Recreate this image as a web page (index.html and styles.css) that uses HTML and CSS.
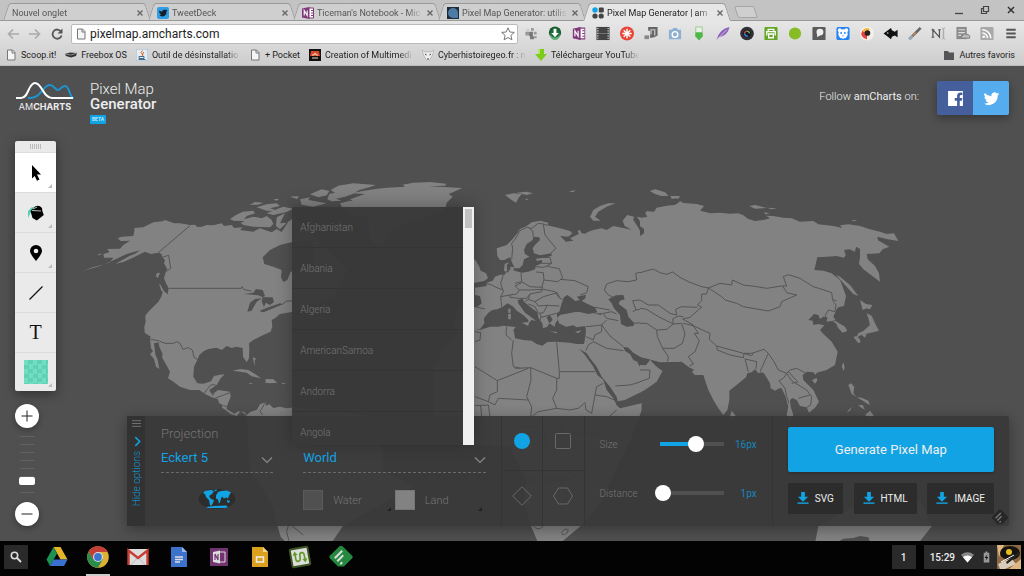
FILE: index.html
```html
<!DOCTYPE html>
<html lang="fr">
<head>
<meta charset="utf-8">
<title>Pixel Map Generator | amCharts</title>
<link rel="stylesheet" href="styles.css">
</head>
<body>
<svg class="defs" aria-hidden="true">
  <symbol id="page" viewBox="0 0 12 12"><path d="M2.500 1h5l2.500 2.500V11h-7.500z" fill="#f5f5f5" stroke="#777"/><path d="M7 1v3h3" fill="none" stroke="#777"/></symbol>
  <symbol id="cross" viewBox="0 0 8 8"><path d="M1.500 1.500l5 5M6.500 1.500l-5 5" stroke="currentColor" stroke-width="1.400"/></symbol>
  <symbol id="onenote" viewBox="0 0 12 12"><path d="M6 1h5.500v10H6z" fill="#fff" stroke="#80397b"/><path d="M9 3.500h2M9 6h2M9 8.500h2" stroke="#80397b"/><path d="M0 1.500L7.500 0v12L0 10.500z" fill="#80397b"/><path d="M2.200 8.500v-5l3 5v-5" fill="none" stroke="#fff" stroke-width="1.100"/></symbol>
  <symbol id="chevron" viewBox="0 0 12 8"><path d="M1 1.500l5 5 5-5" fill="none" stroke="currentColor" stroke-width="1.200"/></symbol>
  <symbol id="download" viewBox="0 0 12 14"><path d="M4 0h4v5h3.500L6 10.500.5 5H4z" fill="#12a3e4"/><path d="M0 12h12" stroke="#12a3e4" stroke-width="1.500"/></symbol>
  <symbol id="feedly" viewBox="0 0 24 24"><path d="M10.500 1.200L.8 10.800q-1 1.200 0 2.400L9 21.500h6l8.200-8.300q1-1.200 0-2.400L13.500 1.200q-1.500-1-3 0z" fill="currentColor"/><path d="M6.500 12.500l6-6M9 15.500l4.500-4.500M12 18.500l.5-.5" stroke="var(--mark)" stroke-width="2" stroke-linecap="square"/></symbol>
</svg>

<header class="browser">
  <nav class="tabs" aria-label="Onglets">
    <div class="tab"><span class="tab-title">Nouvel onglet</span><button class="close" aria-label="Fermer"><svg><use href="#cross"/></svg></button></div>
    <div class="tab"><svg class="favicon" viewBox="0 0 12 12"><rect width="12" height="12" rx="2" fill="#2e9fe6"/><path d="M2 3.500l3 1.200Q5.500 2.500 8 2.800L10.500 3 9.500 4.500Q9.500 9.500 5 9.500L2.500 8.500 4 7.500 2.500 6z" fill="#14202b"/></svg><span class="tab-title">TweetDeck</span><button class="close" aria-label="Fermer"><svg><use href="#cross"/></svg></button></div>
    <div class="tab"><svg class="favicon"><use href="#onenote"/></svg><span class="tab-title">Ticeman's Notebook - Mic</span><button class="close" aria-label="Fermer"><svg><use href="#cross"/></svg></button></div>
    <div class="tab"><svg class="favicon" viewBox="0 0 12 12"><rect width="12" height="12" fill="#1b2c3b"/><path d="M1 6a5 5 0 0 1 10 0v5H6a5 5 0 0 1-5-5z" fill="#4d7ba3"/></svg><span class="tab-title">Pixel Map Generator: utilis</span><button class="close" aria-label="Fermer"><svg><use href="#cross"/></svg></button></div>
    <div class="tab active"><svg class="favicon" viewBox="0 0 12 12"><circle cx="3" cy="3" r="2.700" fill="#12a3e4"/><rect x="6.800" y=".5" width="5" height="5" rx="1" fill="#444"/><circle cx="3" cy="9" r="2.600" fill="#444"/><circle cx="9.200" cy="9" r="2.600" fill="#444"/></svg><span class="tab-title">Pixel Map Generator | am</span><button class="close" aria-label="Fermer"><svg><use href="#cross"/></svg></button></div>
    <button class="new-tab" aria-label="Nouvel onglet"></button>
    <div class="window-buttons">
      <button aria-label="Réduire"><svg viewBox="0 0 10 10"><path d="M1 8.500h8" stroke="#444" stroke-width="1.300"/></svg></button>
      <button aria-label="Restaurer"><svg viewBox="0 0 10 10"><path d="M3.500 1.500h5v5h-5zM3 3.500H1.500v5h5V7" fill="none" stroke="#444" stroke-width="1.200"/></svg></button>
      <button aria-label="Fermer"><svg viewBox="0 0 10 10"><path d="M2 2l6 6M8 2L2 8" stroke="#333" stroke-width="1.500"/></svg></button>
    </div>
  </nav>
  <div class="toolbar">
    <button class="nav" aria-label="Précédent"><svg viewBox="0 0 12 12"><path d="M12 6H1.500M6 1.500L1.500 6 6 10.500" fill="none" stroke="#aaa" stroke-width="1.600"/></svg></button>
    <button class="nav" aria-label="Suivant"><svg viewBox="0 0 12 12"><path d="M0 6h10.500M6 1.500L10.500 6 6 10.500" fill="none" stroke="#aaa" stroke-width="1.600"/></svg></button>
    <button class="nav" aria-label="Actualiser"><svg viewBox="0 0 12 12"><path d="M10 3.500A4.600 4.600 0 1 0 10.600 7.500" fill="none" stroke="#555" stroke-width="1.800"/><path d="M11.500.5v5h-5z" fill="#555"/></svg></button>
    <div class="address">
      <svg viewBox="0 0 12 12"><use href="#page"/></svg>
      <input type="text" value="pixelmap.amcharts.com" aria-label="Adresse">
      <svg viewBox="0 0 14 14" class="star"><path d="M7 .8l1.800 4.200 4.500.4-3.400 3 1 4.400L7 10.500l-3.900 2.300 1-4.400-3.400-3L5.200 5z" fill="#fff" stroke="#777"/></svg>
    </div>
    <div class="extensions">
      <svg viewBox="0 0 16 16"><path d="M2 6h4v4H2zM8 2h3v3H8zM11 6h3v3h-3zM11 11h3v2h-3z" fill="#999"/><path d="M6 6h4v5H6zM7 11h4v3H7z" fill="#777"/><path d="M3 3h3v3H3z" fill="#ccc"/></svg>
      <svg viewBox="0 0 16 16"><circle cx="8" cy="7" r="6.500" fill="#19592f"/><circle cx="8" cy="10" r="5" fill="#5fae78"/><circle cx="8" cy="7.500" r="5" fill="#1f6a3a"/><path d="M6.500 3h3v4.500H12L8 12 4 7.500h2.500z" fill="#fff"/></svg>
      <svg viewBox="-1 -1 14 14"><use href="#onenote" width="12" height="12"/></svg>
      <svg viewBox="0 0 16 16"><path d="M1 1h14v14H1z" fill="#444"/><path d="M2.500 2v13M13.500 2v13" stroke="#ddd" stroke-width="1.300" stroke-dasharray="1.300 1.300"/><path d="M4 8h8" stroke="#777"/></svg>
      <svg viewBox="0 0 16 16"><circle cx="8" cy="8" r="7.500" fill="#e8443a"/><path d="M8 3v10M3 8h10M4.500 4.500l7 7M11.500 4.500l-7 7" stroke="#fff" stroke-width="1.500"/></svg>
      <svg viewBox="0 0 16 16"><path d="M5 1h10v9q-4 3-8 2.500V5H5z" fill="#666"/><path d="M8 9V4h4v6" fill="none" stroke="#ccc" stroke-width="1.300"/><path d="M1 10h5v4H1z" fill="#888"/></svg>
      <svg viewBox="0 0 16 16"><path d="M5 4l1-2h4l1 2h3.500v10h-13V4z" fill="#8db0d0"/><circle cx="8" cy="9" r="3" fill="none" stroke="#fff" stroke-width="1.500"/></svg>
      <svg viewBox="0 0 16 16"><path d="M4.500 1h7v6h-7z" fill="#e9eee7" stroke="#9cc98f"/><path d="M4 7h8v4l-4 4.500L4 11z" fill="#4db848"/></svg>
      <svg viewBox="0 0 16 16"><path d="M1 15Q4 3 15 1 13 10 4 12z" fill="#8d62b8"/><path d="M1 15L12 4" stroke="#d9c8ea"/></svg>
      <svg viewBox="0 0 16 16"><circle cx="8" cy="8" r="7.300" fill="#30303a"/><circle cx="8" cy="8" r="4" fill="#16161c"/><path d="M5.500 8a2.500 2.500 0 0 1 2.500-2.500" stroke="#e4425a" stroke-width="1.500" fill="none"/><path d="M8 5.500a2.500 2.500 0 0 1 2.500 2.500" stroke="#58c454" stroke-width="1.500" fill="none"/><path d="M5.500 8a2.500 2.500 0 0 0 3.500 2.500" stroke="#408bd8" stroke-width="1.500" fill="none"/></svg>
      <svg viewBox="0 0 16 16"><rect x="1" y="1" width="14" height="14" rx="1" fill="#65a629"/><path d="M3.500 10V6h9v4M5 6V3.500h6V6M5.500 8.500h5v4h-5z" fill="none" stroke="#fff" stroke-width="1.400"/></svg>
      <svg viewBox="0 0 16 16"><circle cx="8" cy="8" r="6.500" fill="#86bc25"/></svg>
      <svg viewBox="0 0 16 16"><rect x="1" y="1" width="14" height="14" rx="1" fill="#5b5b5b"/><circle cx="9" cy="6.500" r="3.700" fill="#eee"/><path d="M6 8v4l3-2z" fill="#eee"/></svg>
      <svg viewBox="0 0 16 16"><rect x="1" y="1" width="14" height="14" rx="2" fill="#2383f5"/><circle cx="4.500" cy="4.500" r="2" fill="#fff"/><circle cx="11.500" cy="4.500" r="2" fill="#fff"/><circle cx="8" cy="8.500" r="5" fill="#fff"/><circle cx="6" cy="7.500" r="1" fill="#2383f5"/><circle cx="10" cy="7.500" r="1" fill="#2383f5"/><path d="M7 10h2l-1 1.500z" fill="#2383f5"/></svg>
      <svg viewBox="0 0 16 16"><circle cx="8" cy="8" r="7.500" fill="#f4f0e8"/><path d="M8 8L3 5a5.800 5.800 0 0 0 5 9z" fill="#e6413a"/><path d="M3 5a5.800 5.800 0 0 1 8-2L8 8z" fill="#f4b63d"/><circle cx="8.500" cy="7.500" r="3" fill="#222"/></svg>
      <svg viewBox="0 0 16 16"><path d="M0 8l4-3 4-3 1 2.500 3 1.500 3-2v8l-3-2-3 1.500L8 14l-4-3z" fill="#111"/><circle cx="4.500" cy="7.500" r=".8" fill="#ddd"/></svg>
      <svg viewBox="0 0 16 16"><path d="M2 14L14 2" stroke="#666" stroke-width="3"/><path d="M2 14l3.500-3.500" stroke="#9ab" stroke-width="2.500"/><path d="M6 10l3-3" stroke="#b5835a" stroke-width="2.500"/></svg>
      <svg viewBox="0 0 16 16"><path d="M1.500 12V4l7 8V4M0 4h3M7 4h3M0 12h3" fill="none" stroke="#555" stroke-width="1.300"/><path d="M11 2q1.500 0 1.500 1v10q0 1-1.500 1M14.500 2q-1.500 0-1.500 1v10q0 1 1.500 1" fill="none" stroke="#aaa"/></svg>
      <svg viewBox="0 0 16 16"><path d="M1 1h11v13H1z" fill="#8b8b8b"/><path d="M3 4h7M3 7h7M3 10h3" stroke="#ddd" stroke-width="1.300"/><path d="M6 13q-1-3 2-3 1-3 4-1 4 0 3 4z" fill="#bbb" stroke="#777"/></svg>
      <svg viewBox="0 0 16 16"><rect x="1" y="1" width="14" height="14" rx="1" fill="#a9a9a9"/><circle cx="4.500" cy="11.500" r="1.400" fill="#fff"/><path d="M3 7.500a5.500 5.500 0 0 1 5.500 5.500M3 4a9 9 0 0 1 9 9" fill="none" stroke="#fff" stroke-width="1.600"/></svg>
      <svg viewBox="0 0 16 16"><path d="M3 4h10M3 8h10M3 12h10" stroke="#555" stroke-width="2"/></svg>
    </div>
  </div>
  <nav class="bookmarks" aria-label="Favoris">
    <a href="#"><svg><use href="#page"/></svg><span>Scoop.it!</span></a>
    <a href="#"><svg viewBox="0 0 12 12"><path d="M0 5l5-1.500 7 .5-1 3-5 1.500L1 7z" fill="#333"/><path d="M0 5l6 1 6-2" stroke="#888" fill="none"/></svg><span>Freebox OS</span></a>
    <a href="#"><svg viewBox="0 0 12 12"><rect width="12" height="12" rx="1" fill="#e4edf5" stroke="#9fb4c8"/><path d="M6.500 1.500Q4 3.500 6 5t0 2M8 3Q6.500 4 7 5.500" stroke="#d8641e" fill="none"/><path d="M3 7.500h5v2H3zM2.500 10.500h7" stroke="#486a8b" fill="none"/></svg><span class="faded">Outil de désinstallatio</span></a>
    <a href="#"><svg><use href="#page"/></svg><span>+ Pocket</span></a>
    <a href="#"><svg viewBox="0 0 12 12"><path d="M0 0h12v12H0z" fill="#111"/><path d="M2 2h8l1 5H1z" fill="#d84a2c"/><path d="M3 6h2l1-2 1 2h2M3 9h6" stroke="#f7d7b9" fill="none"/></svg><span class="faded">Creation of Multimedi</span></a>
    <a href="#"><svg viewBox="0 0 12 12"><path d="M0 1l3 2h6l3-2-2 6-3 5H5L2 7z" fill="#eee" stroke="#999" stroke-width=".5"/><path d="M3 5l1.500 1M9 5L7.500 6M5 10h2" stroke="#333"/></svg><span class="faded">Cyberhistoiregeo.fr : n</span></a>
    <a href="#"><svg viewBox="0 0 12 12"><path d="M3 0h6v5h3l-6 7-6-7h3z" fill="#7ccc1c"/><path d="M3 0h2v5H3z" fill="#b5e66c"/></svg><span class="faded">Téléchargeur YouTube</span></a>
    <a href="#" class="others"><svg viewBox="0 0 12 12"><path d="M1 2h4l1 1.500h5V11H1z" fill="#555"/></svg><span>Autres favoris</span></a>
  </nav>
</header>

<main class="app">
  <svg class="map" viewBox="0 66 1024 475" preserveAspectRatio="xMidYMid slice" aria-label="World map" role="img">
    <g transform="translate(80 170) scale(.33333)">
      <path class="land" d="M8 303L40 291 70 284 100 271 140 252 180 241 165 251 148 258 134 266 106 281 130 276 165 260 195 245 212 252 235 248 245 252 247 262 255 270 252 280 262 298 256 310 252 325 258 340 266 355 263 373 251 362 242 345 237 340 243 360 248 366 244 380 235 395 220 410 205 425 196 437 197 455 193 470 194 488 212 500 210 508 213 535 219 543 210 553 222 567 228 590 238 597 233 570 226 553 222 520 236 517 238 530 248 553 246 562 262 590 270 605 264 625 280 635 300 650 330 660 358 660 375 672 395 682 413 687 418 700 428 705 426 713 437 720 452 732 470 738 480 726 492 725 500 735 512 725 530 720 540 703 556 697 558 707 568 703 580 714 600 710 620 715 645 712 900 740 910 900 1000 950 789 1068 750 1125 625 1125 602 1100 590 1060 580 1010 510 900 500 740 490 728 475 724 463 731 440 717 440 710 452 680 450 665 415 660 395 673 388 660 410 645 422 625 434 613 420 614 402 618 393 634 370 641 352 640 340 620 342 590 352 570 358 555 372 543 385 537 410 533 425 540 440 528 455 534 468 530 488 534 489 560 500 577 507 565 508 535 507 520 520 510 545 497 572 485 577 470 575 450 585 445 600 432 640 425 760 380 800 300 740 240 700 200 645 140 625 155 615 170 605 186 590 177 575 187 540 175 520 185 480 180 488 172 462 174 455 165 432 168 425 160 400 166 380 165 365 170 352 171 345 164 330 165 300 160 282 160 255 150 248 154 220 157 190 172 163 174 163 184 160 198 125 200 113 205 122 213 150 212 130 225 120 236 82 237 88 247 70 252 72 263 100 263 90 277 60 288Z"/>
      <path class="land" d="M450 147L468 135 488 125 520 122 525 130 500 138 492 148 520 140 545 145 560 138 575 150 580 162 570 172 520 170 490 165 482 158 495 153 460 152ZM510 104L525 96 550 98 535 104ZM530 112L560 103 590 100 600 108 570 115 595 123 560 122ZM590 142L615 130 600 160 620 158 600 178 588 168ZM560 130L590 118 610 110 640 116 620 126 580 135ZM632 78L655 82 650 88ZM580 88L598 86 590 92ZM458 602L480 597 505 600 525 612 543 625 515 619 500 608 480 605ZM557 627L580 628 592 638 570 640 556 638ZM507 638L520 640 510 643ZM605 638L620 641 607 643ZM50 255L65 250 60 256ZM230 310L240 308 233 325 228 318ZM518 562L530 566 524 570 525 590 521 575Z"/>
      <path class="sea" d="M640 215L600 225 570 240 548 262 553 282 580 290 605 300 603 322 610 336 622 330 632 305 700 290 700 210ZM492 372L520 368 528 357 548 360 555 378 548 382 535 376ZM502 425L510 398 525 387 546 385 530 395 515 422ZM548 382L578 382 582 396 570 405 557 398 552 412 545 394ZM538 423L565 412 600 400 608 403 580 415 550 427Z"/>
      <path class="border" d="M330 167L236 247 246 262 266 256 272 295 260 304M266 355H484L486 350 492 359 515 363M548 420L608 402 620 393H640M212 508L235 512 255 520H280L290 515 300 520 309 538 325 533 337 540 342 562 355 570M371 672L384 655 392 645 405 644 410 650M397 678L406 663M405 685L430 675 450 668M430 707L440 710M548 735L540 725 556 697M500 725L498 738M627 1060L620 1085 630 1125M627 1060L670 1095"/>
    </g>
    <g transform="translate(290 170) scale(.33333)">
      <path class="land" d="M180 88L225 72 185 70 222 62 262 56 290 53 345 50 338 44 370 38 420 36 468 41 466 47 415 49 460 51 517 54 492 65 476 72 488 80 470 98 465 120 430 130 300 180 270 240 240 200 230 120ZM60 73L95 58 118 63 110 76 85 82ZM112 88L118 72 135 68 122 60 145 47 190 40 257 45 238 52 208 60 186 73 165 80 138 86 155 92 125 94ZM0 82L25 78 25 84ZM30 88L60 82 55 90 85 95 110 100 70 110 35 104ZM150 100L180 92 230 100 245 130 200 140 160 120Z"/>
    </g>
    <g transform="translate(460 180) scale(.33333)">
      <path class="land" d="M110 205L112 228 120 240 133 240 150 232 155 245 164 265 178 265 188 255 192 238 208 230 195 222 192 210 200 192 218 180 220 170 238 172 240 180 225 195 218 205 222 220 240 226 274 220 275 228 250 233 228 236 230 243 246 240 246 250 228 257 225 268 205 275 185 278 165 272 150 268 143 278 132 272 134 252 148 246 140 256 142 270 134 284 120 284 105 290 98 302 80 308 80 318 45 323 45 345 60 348 65 370 52 380 45 382 0 380-20 420 0 470 45 450 60 448 73 430 72 415 85 398 97 390 112 388 128 380 143 370 160 380 170 392 190 405 205 420 205 432 214 420 228 423 212 410 195 398 175 370 173 360 188 356 192 365 210 380 232 397 236 415 247 430 249 445 262 440 268 430 260 412 270 405 278 420 268 430 284 440 286 430 293 420 290 400 305 390 398 390 405 400 430 400 422 405 395 398 350 395 300 405 292 413 297 430 318 440 340 436 350 442 375 438 378 450 376 470 372 492 350 492 330 488 285 485 262 486 247 497 230 492 215 482 190 480 165 475 163 460 160 450 167 441 130 437 115 440 90 440 60 450 20 450-30 480-80 560-80 700 0 790 150 800 200 900 190 960 213 1038 235 1090 300 1090 362 1038 420 970 520 760 545 690 545 670 480 685 470 676 460 655 440 630 430 600 412 585 400 560 375 525 357 506 380 520 390 535 410 560 425 590 450 620 470 650 473 664 495 660 555 630 590 605 607 573 590 560 575 545 572 538 565 558 555 562 538 558 532 545 520 540 510 522 495 513 490 500 505 503 520 518 540 530 555 535 565 528 580 532 600 545 660 545 660 65 640 78 620 82 605 92 585 96 560 93 558 100 575 108 550 114 530 110 536 118 550 140 556 157 545 168 540 152 530 135 520 120 522 110 502 105 492 117 488 122 494 138 515 149 490 144 460 138 440 150 425 145 400 150 385 155 375 161 365 160 360 150 353 152 356 162 330 175 340 182 318 185 300 168 325 170 337 160 330 153 300 145 262 136 265 128 240 122 215 127 200 138 180 147 172 160 155 180 140 195Z"/>
      <path class="land" d="M45 238L58 260 62 272 78 280 84 295 72 303 45 308 20 312 25 280 30 250ZM135 45L160 40 185 42 175 55 168 68 155 60ZM170 38L200 35 219 40 200 45ZM195 56L206 57 200 61ZM326 34L347 31 340 37ZM390 110L400 90 420 78 445 70 467 70 440 80 415 95 405 110 422 122 400 122ZM570 33L590 29 615 38 625 47 605 48 585 42ZM632 48L660 48 655 56 636 54ZM144 388L151 385 152 398 146 400ZM144 403L153 402 152 418 145 418ZM185 428L207 426 205 438ZM268 454L292 456 290 460ZM345 456L365 450 355 460ZM150 260L163 262 160 270 152 270Z"/>
      <path class="sea" d="M298 395L305 370 312 352 322 345 336 355 345 363 360 360 350 350 378 344 375 356 365 362 378 370 405 382 412 397 385 402 360 396 340 392 315 400ZM445 358L468 346 490 345 494 358 480 362 476 372 500 390 505 410 523 430 520 438 500 440 483 432 480 405 462 385 455 370Z"/>
      <path class="border" d="M155 238L158 205 155 190 165 178 180 152 200 142 215 145 235 130 250 132 262 136M220 170L218 153 208 145M250 133L255 165 288 205 272 220M246 233L270 232 275 250 260 258M228 260L250 262 262 258 275 262 298 266 308 294 293 305 252 300 250 278 228 276M246 250L275 250M183 278L185 305 210 320 245 322 252 300M165 310L185 305M130 285L122 310 130 335 122 350 150 345 170 342 178 330 165 318 185 308M80 310L95 315 108 322 130 330M122 350L125 380M45 380L75 387M150 345L150 352 175 355 200 355 210 342 245 335 248 320M178 330L210 330 250 328M210 342L205 358 225 365 250 350 292 338 300 355 308 358M225 365L235 378 262 376 298 378M205 358L195 365M205 372L225 380 235 400 250 398 262 376M240 400L243 412 290 400M243 412L238 425M300 298L345 302 385 320 380 338 360 345M250 328L285 335 293 348 300 355M433 330L440 312 470 302 505 305 530 300 527 280 560 272 585 267 620 278 660 280M433 330L445 345 460 352M405 382L450 390M430 400L455 395 470 402M430 400L440 415 475 422M518 362L560 358 600 375 632 380 660 375M518 362L528 390 518 395M528 390L560 385 600 410 640 432M518 430L550 428 590 445 640 432M590 445L592 480 615 512 628 535 612 545M425 435L450 468 490 500M378 440L400 438 425 435 440 420M378 470L400 480 405 465 425 455 425 435M378 512L385 495 400 485 440 505 490 512M466 618L510 615 550 603 570 590 572 570 540 560M550 603L555 625M290 487L298 575H405M298 575V595H290L212 563 165 565M45 560L112 602 205 565M160 480L155 520 160 560 182 565M140 440L138 465 155 480M45 455L62 458 60 480 45 485M212 563L213 600 200 650 205 660M290 595L290 630 278 655 290 685M112 602L112 635 90 645 85 665 45 650M85 665L105 675 115 655 205 660 215 680 212 710M45 677L85 675 90 710M62 677L65 710M290 685L330 690 355 685 375 668 378 690 395 700M215 710L235 695 290 685M395 700L405 645 440 650 475 665M405 645L410 620 430 610M425 730L470 690M300 720L310 760 420 760M180 740L250 740 260 800 310 840M200 900H330L380 860M220 1038Q235 1055 250 1038M305 1058q10-16 20-8 0 10-12 14-8 2-8-6"/>
    </g>
    <g transform="translate(640 170) scale(.33333)">
      <path class="land" d="M0 145L22 140 15 128 42 125 50 113 80 107 110 104 120 93 130 99 170 102 192 108 180 122 212 130 240 128 270 131 295 130 310 136 325 147 345 153 370 150 390 145 378 137 400 138 430 143 455 145 480 155 520 153 535 163 555 165 580 168 607 174 600 166 625 163 660 168 690 178 720 185 740 192 762 190 775 213 740 207 712 200 714 211 748 230 728 238 718 250 680 252 683 268 705 288 717 310 720 335 700 320 670 298 657 282 660 262 660 237 648 230 645 245 628 238 612 240 617 256 612 263 590 258 560 260 532 262 523 300 550 302 575 310 600 330 608 350 618 378 612 408 595 412 590 418 580 440 590 455 615 470 622 483 608 488 595 475 588 460 575 453 560 455 562 440 550 440 540 447 535 435 522 432 505 450 518 452 520 465 535 462 553 466 540 480 548 490 575 515 593 545 585 585 560 600 530 608 527 615 520 607 500 605 488 615 490 630 505 645 520 660 537 695 525 713 507 728 500 712 480 708 470 690 457 684 450 690 452 710 460 735 448 760 440 735 445 710 437 680 425 655 418 655 405 662 392 655 390 640 372 610 365 607 355 610 345 598 335 607 322 610 318 622 298 638 268 662 268 690 262 720 250 735 235 715 220 690 205 660 190 615 165 615 155 605 163 600 147 592 125 575 60 577 35 570 0 560Z"/>
      <path class="land" d="M0 585L18 586 30 570 35 585 67 603 55 625 25 645 0 668ZM30 63L45 58 75 67 85 77 60 76ZM92 77L118 82 95 87ZM328 108L345 105 380 114 345 116ZM380 113L412 115 395 118ZM635 150L652 150 640 154ZM372 127L390 130 376 133ZM588 314L600 320 630 345 655 378 640 372 610 340ZM660 390L678 402 697 405 690 418 680 415 668 420ZM680 430L695 437 705 460 717 482 700 487 685 490 665 495 650 500 655 490 670 483 690 465 685 445ZM640 500L655 498 662 515 655 520ZM665 495L680 492 675 503ZM605 590L610 577 614 590 612 603ZM516 630L530 624 532 633 524 641ZM275 722L287 737 278 750 270 740ZM625 645L633 640 643 650 640 670 650 680 635 672ZM650 682L665 683 685 692 690 705 680 700 665 690ZM655 705L668 705 675 720 662 712ZM620 727L635 710 630 722ZM675 735L690 722 700 735 700 750ZM525 1120L535 1068 640 1010 720 990 780 1010 800 1030 840 990 876 1068 835 1120Z"/>
      <path class="sea" d="M0 168L12 177 12 190 0 198ZM650 505L668 496 662 505ZM585 1120L610 1106 640 1104 660 1098 685 1102 692 1120Z"/>
      <path class="border" d="M0 308L40 297 60 308 80 313 98 306 120 322 145 335 185 350 205 354 240 340 275 345 277 330 310 345 350 350 380 355 425 348 440 348 430 320 445 314 480 325 520 350 552 360 575 368 578 390 590 392M205 354L245 380 255 390 290 400 310 410 385 423 420 410 425 395 470 375 440 368 428 348M205 354L200 372 185 372 185 392 172 405 185 412 175 420 150 442 128 447 160 465M0 390L25 405 55 405 90 430 110 435 107 418 125 410 172 412M0 415L20 418 55 440 100 462 98 447 115 438 130 440M0 460L20 460 50 480 80 478 100 462 125 460 135 492 127 520 102 535 68 535 52 500 50 480M68 535L85 560 83 575M130 460L160 467 175 490 163 490 178 512 165 545 145 560 160 582 148 588M155 465L210 490 208 508 230 528 310 550M230 528L232 540 270 555 310 563 312 550 335 550 372 538 385 550M310 550L335 557 340 550M315 567L325 605M315 567L350 575 348 597M385 550L367 590 360 605M385 550L402 575 415 600 440 610 430 625 417 632 435 655 440 680 447 700M440 610L450 600 470 595 495 608M440 610L455 632 475 645 500 660 515 680 512 705 500 712M445 605L470 632M475 685L510 675M455 640L475 635M555 438L565 420 585 425 588 405 578 392M575 455L590 450M0 600L30 600 28 625 0 635"/>
    </g>
  </svg>

  <header class="app-header">
    <a class="logo" href="#" aria-label="amCharts">
      <svg viewBox="0 0 60 19"><path d="M13 17c14 1 14-13 22-13 4 0 5 5 8 5s3-4 7-4c5 0 4 12 9 12" fill="none" stroke="#1d93cf" stroke-width="2"/><path d="M1 17h5C14 17 13 2 20 2s8 15 17 15h21" fill="none" stroke="#fff" stroke-width="2"/></svg>
      <span>AM<b>CHARTS</b></span>
    </a>
    <h1>Pixel Map<b>Generator</b><small>BETA</small></h1>
    <p>Follow <b>amCharts</b> on:</p>
    <div class="social">
      <a class="fb" href="#" aria-label="Facebook"><svg viewBox="0 0 16 16"><path d="M1 1h14v14h-3v-5h2l.4-2.400h-2.400V6c0-.9.3-1.400 1.500-1.400h1V2.500c-3.400-.6-5 .6-5 3.200v1.900H7.300V10h2.200v5H1z" fill="#fff"/></svg></a>
      <a class="tw" href="#" aria-label="Twitter"><svg viewBox="0 0 24 24"><path d="M23 5.500a9 9 0 0 1-2.600.7 4.500 4.500 0 0 0 2-2.500 9 9 0 0 1-2.900 1.100 4.500 4.500 0 0 0-7.700 4.100A12.800 12.800 0 0 1 2.500 4.200a4.500 4.500 0 0 0 1.400 6 4.500 4.500 0 0 1-2-.5 4.500 4.500 0 0 0 3.600 4.400 4.500 4.500 0 0 1-2 .1 4.500 4.500 0 0 0 4.200 3.100A9 9 0 0 1 1 19.200a12.800 12.800 0 0 0 19.700-11.400A9 9 0 0 0 23 5.500z" fill="#fff"/></svg></a>
    </div>
  </header>

  <div class="workspace">
    <aside class="side">
      <div class="tools">
        <div class="grip"><i></i></div>
        <button class="tool selected more" aria-label="Select"><svg viewBox="0 0 16 16"><path d="M4 0l9 9.500H9l2.500 5-2.500 1.200L6.700 11 4 13.500z"/></svg></button>
        <button class="tool more" aria-label="Fill"><svg viewBox="0 0 16 16"><path d="M0 13V6l4-4 3 1-4 4z" fill="#55d0b2"/><path d="M2.500 6L7 1.500Q11-.5 14 3l.3 3 1.500 4-7 5.500L4.500 13z"/><path d="M4 5.500l9 .5M5 4l4-2" stroke="#eee" stroke-width=".8"/></svg></button>
        <button class="tool more" aria-label="Marker"><svg viewBox="0 0 16 16"><path d="M8 16Q2 9 2 6a6 6 0 0 1 12 0q0 3-6 10z"/><circle cx="8" cy="6" r="2.300" fill="#eee"/></svg></button>
        <button class="tool" aria-label="Line"><svg viewBox="0 0 16 16"><path d="M1.500 14.500l13-13" stroke="#111" stroke-width="1.200"/></svg></button>
        <button class="tool text-tool" aria-label="Text">T</button>
        <button class="tool more" aria-label="Color"><span class="color"></span></button>
      </div>
      <div class="zoom">
        <button aria-label="Zoom in"><svg viewBox="0 0 12 12"><path d="M6 .5v11M.5 6h11" stroke="#222"/></svg></button>
        <input type="range" min="0" max="100" value="22" aria-label="Zoom">
        <button aria-label="Zoom out"><svg viewBox="0 0 12 12"><path d="M.5 6h11" stroke="#222"/></svg></button>
      </div>
    </aside>

    <section class="options">
      <button class="hide">
        <svg viewBox="0 0 8 6"><path d="M0 .5h8M0 3h8M0 5.500h8" stroke="#777" stroke-width=".8"/></svg>
        <svg class="arrow" viewBox="0 0 6 10"><path d="M1 1l4 4-4 4" fill="none" stroke="#12a3e4" stroke-width="1.400"/></svg>
        <span>Hide options</span>
      </button>
      <div class="projection">
        <label for="projection">Projection</label>
        <div class="select"><select id="projection"><option>Eckert 5</option></select><svg><use href="#chevron"/></svg></div>
        <svg class="globe" viewBox="0 0 38 20"><ellipse cx="19" cy="10" rx="18.500" ry="10" fill="#2d2d2d"/><path d="M7 2l6-1 3 1-2 3-3 2 2 3 3 1-1 3-2 3-1-1-1-5-3-3-1-3-2-1zM20 3l3-1 6-.5 4 2-2 3-1 3-2-1-2 1-2-2-1 2-1 4-1 1-1-4-2-1v-3zM16 1l3-.5-1 2zM29 11l3 1-1 2-2-1zM8 18l8-1 12-.5 2 1.500-3 1H10z" fill="#12a3e4"/></svg>
      </div>
      <div class="area">
        <div class="select"><select aria-label="Map area"><option>World</option></select><svg><use href="#chevron"/></svg></div>
        <div class="swatches">
          <button class="swatch water"><i></i>Water</button>
          <button class="swatch ground"><i></i>Land</button>
        </div>
        <div class="dropdown">
          <ul role="listbox" aria-label="Map area">
            <li role="option">Afghanistan</li><li role="option">Albania</li><li role="option">Algeria</li><li role="option">AmericanSamoa</li><li role="option">Andorra</li><li role="option">Angola</li>
          </ul>
          <div class="scrollbar"><i></i></div>
        </div>
      </div>
      <div class="shapes">
        <label><input type="radio" name="shape" aria-label="Circle" checked><svg viewBox="0 0 20 20"><circle cx="10" cy="10" r="8" fill="#12a3e4"/></svg></label>
        <label><input type="radio" name="shape" aria-label="Square"><svg viewBox="0 0 20 20"><rect x="2.500" y="2.500" width="15" height="15" rx="1"/></svg></label>
        <label><input type="radio" name="shape" aria-label="Diamond"><svg viewBox="0 0 20 20"><path d="M10 .7l9.300 9.300-9.300 9.300L.7 10z"/></svg></label>
        <label><input type="radio" name="shape" aria-label="Hexagon"><svg viewBox="0 0 20 20"><path d="M5.500 2h9l5 8-5 8h-9l-5-8z"/></svg></label>
      </div>
      <div class="sliders">
        <label for="size">Size</label><input id="size" type="range" value="56" style="--fill:56%"><output for="size">16px</output>
        <label for="distance">Distance</label><input id="distance" type="range" value="5" style="--fill:5%"><output for="distance">1px</output>
      </div>
      <div class="export">
        <button class="generate">Generate Pixel Map</button>
        <div class="formats">
          <button><svg><use href="#download"/></svg>SVG</button>
          <button><svg><use href="#download"/></svg>HTML</button>
          <button><svg><use href="#download"/></svg>IMAGE</button>
        </div>
        <svg class="feedly-mini"><use href="#feedly"/></svg>
      </div>
    </section>
  </div>
</main>

<footer class="shelf">
  <button class="tile search" aria-label="Rechercher"><svg viewBox="0 0 12 12"><circle cx="4.500" cy="4.500" r="3.200" fill="none" stroke="#ddd" stroke-width="1.600"/><path d="M7 7l4 4" stroke="#ddd" stroke-width="1.800"/></svg></button>
  <nav class="launcher" aria-label="Applications">
    <button aria-label="Drive"><svg viewBox="0 0 24 24"><path d="M8.500 2h7l7 12.500h-7z" fill="#e5b42b"/><path d="M8.500 2L12 8.500 5 21 1.500 14.500z" fill="#1d9250"/><path d="M8.500 14.500h14L19 21H5z" fill="#3a70d0"/></svg></button>
    <button class="running" aria-label="Chrome"><svg viewBox="0 0 24 24"><circle cx="12" cy="12" r="10.800" fill="#ddaf35"/><path d="M2.700 6.500A10.800 10.800 0 0 0 12 22.800l5-8.800H7z" fill="#288c4d"/><path d="M2.700 6.500A10.800 10.800 0 0 1 21.500 7H12L7.500 15z" fill="#c23e36"/><circle cx="12" cy="12" r="5" fill="#ddd"/><circle cx="12" cy="12" r="3.900" fill="#3a76cf"/></svg></button>
    <button aria-label="Gmail"><svg viewBox="0 0 24 24"><path d="M2 4h20v16H2z" fill="#ddd"/><path d="M5 20l7-8 7 8" fill="none" stroke="#bbb"/><path d="M2.500 20V5.500L12 13l9.500-7.500V20" fill="none" stroke="#c73d33" stroke-width="2.400"/></svg></button>
    <button aria-label="Docs"><svg viewBox="0 0 24 24"><path d="M4 2h11l5 5v15H4z" fill="#3d72cb"/><path d="M15 2v5h5z" fill="#9bb9e8"/><path d="M8 12h8M8 14.500h8M8 17h5" stroke="#ddd" stroke-width="1.300"/></svg></button>
    <button aria-label="OneNote"><svg viewBox="0 0 24 24"><path d="M3 3h18v18H3z" fill="#713470"/><path d="M12 7h6v10h-6z" fill="none" stroke="#ddd"/><path d="M6 7l7-1.500v13L6 17z" fill="#ddd"/><path d="M8 15V9l3 6V9" fill="none" stroke="#713470" stroke-width="1.200"/></svg></button>
    <button aria-label="Slides"><svg viewBox="0 0 24 24"><path d="M4 2h11l5 5v15H4z" fill="#d9a11e"/><path d="M15 2v5h5z" fill="#f1d78f"/><path d="M8.500 12h7v5h-7z" fill="none" stroke="#eee" stroke-width="1.500"/></svg></button>
    <button aria-label="Liens"><svg viewBox="0 0 24 24"><g transform="rotate(-10 12 12)"><rect x="3" y="3" width="18" height="18" rx="1" fill="#ddd" stroke="#3a5320" stroke-width="2"/><path d="M7.500 8v5q0 3 2.200 3t2.300-3v-2q0-3 2.300-3t2.200 3v4" fill="none" stroke="#5d9b24" stroke-width="1.600"/><path d="M5 9.500l2.500-4 2.500 4M14 14.500l2.500 4 2.500-4" fill="#5d9b24"/></g></svg></button>
    <button class="feedly" aria-label="Feedly"><svg><use href="#feedly"/></svg></button>
  </nav>
  <button class="tile count">1</button>
  <button class="tray"><span>15:29</span><svg viewBox="0 0 14 12"><path d="M0 3.500Q7-1.500 14 3.500L7 12z" fill="#888"/><path d="M2 6q5-3.500 10 0l-5 6z" fill="#fff"/></svg><svg viewBox="0 0 14 12"><path d="M4 1.500h2V0h2v1.500h2V12H4z" fill="#999"/><path d="M8 3L5 7h2l-1 3 3-4H7z" fill="#111"/></svg></button>
  <svg class="avatar" viewBox="0 0 24 24"><path d="M0 0h24v24H0z" fill="#8d6a45"/><path d="M0 0h7L2 12zM24 14v10H12z" fill="#dfb782"/><ellipse cx="13" cy="8" rx="10" ry="7" fill="#17130f"/><circle cx="12" cy="7" r="3" fill="#e4bd24"/><path d="M1 19l13-6 5 6-11 5H3z" fill="#d8cbb9"/><path d="M9 17l12-10 2 2-13 10z" fill="#222"/><path d="M4 17l13-7" stroke="#fff"/></svg>
</footer>
</body>
</html>
```
FILE: styles.css
```css
* { box-sizing: border-box; }
body { margin: 0; min-height: 100vh; display: flex; flex-direction: column; font-family: Roboto, "Liberation Sans", sans-serif; background: #505050; overflow: hidden; }
button { border: 0; padding: 0; background: none; font: inherit; color: inherit; display: flex; align-items: center; justify-content: center; }
a { color: inherit; text-decoration: none; }
svg { display: block; flex: none; }
.defs { position: absolute; width: 0; height: 0; }

/* Browser frame */
.browser { background: linear-gradient(#e6e6e6 22px, #cdcdcd); color: #222; font-size: 9px; border-bottom: 1px solid #bbb; }
.tabs { display: flex; height: 21px; padding-left: 4px; background: #c3c3c3; border-bottom: 1px solid #999; }
.tab { position: relative; flex: 0 1 145px; min-width: 0; display: flex; align-items: center; gap: 3px; padding: 4px 5px 0 8px; height: 21px; color: #555; }
.tab::before, .tab::after { content: ""; position: absolute; top: 3px; bottom: 1px; background: #cfcfcf; border-top: 1px solid #999; }
.tab::before { left: 2px; right: 50%; border-left: 1px solid #999; border-top-left-radius: 3px; transform: skewX(-18deg); }
.tab::after { right: 1px; left: 40%; border-right: 1px solid #999; border-top-right-radius: 3px; transform: skewX(18deg); }
.tab.active { color: #222; z-index: 1; }
.tab.active::before, .tab.active::after { background: #e6e6e6; bottom: 0; }
.tab > * { position: relative; z-index: 1; }
.favicon { width: 12px; height: 12px; }
.tab-title { flex: 1; overflow: hidden; white-space: nowrap; mask-image: linear-gradient(to left, transparent, #000 16px); }
.close svg { width: 8px; height: 8px; color: #666; }
.new-tab { width: 20px; height: 12px; margin: 6px 0 0 7px; border: 1px solid #a5a5a5; border-radius: 2px; background: #cfcfcf; transform: skewX(18deg); }
.window-buttons { margin-left: auto; display: flex; gap: 16px; align-items: center; padding-right: 8px; }
.window-buttons svg { width: 10px; height: 10px; }
.toolbar { display: flex; align-items: center; height: 25px; padding: 0 1px 0 7px; }
.nav { width: 22px; justify-content: flex-start; }
.nav svg { width: 12px; height: 12px; }
.address { flex: 1; height: 20px; margin: 0 1px 0 -2px; padding: 0 2px 0 3px; display: flex; align-items: center; gap: 3px; background: #fff; border: 1px solid #bbb; border-radius: 2px; }
.address svg { width: 12px; height: 12px; }
.address .star { width: 14px; height: 14px; }
.address input { flex: 1; min-width: 0; padding: 0; border: 0; outline: 0; font: 12px Roboto, sans-serif; color: #222; }
.extensions { display: flex; }
.extensions svg { width: 24px; height: 15px; }
.bookmarks { display: flex; align-items: center; gap: 9px; height: 19px; padding: 0 9px 2px 5px; white-space: nowrap; }
.bookmarks a { display: flex; align-items: center; gap: 4px; }
.bookmarks svg { width: 12px; height: 12px; }
.bookmarks .faded { width: 88px; overflow: hidden; mask-image: linear-gradient(to left, transparent, #000 14px); }
.bookmarks .others { margin-left: auto; }

/* Map application */
.app { position: relative; flex: 1; display: flex; flex-direction: column; min-height: 0; color: #eee; overflow: hidden; }
.map { position: absolute; inset: 0; width: 100%; height: 100%; }
.land { fill: #828282; }
.sea { fill: #505050; }
.border { fill: none; stroke: #555; stroke-width: 3; stroke-linejoin: round; }
.app-header { position: relative; display: flex; align-items: flex-start; padding: 15px 15px 0; height: 75px; }
.logo { width: 60px; margin-right: 15px; font: 9px Inter, Roboto, sans-serif; line-height: 10px; text-align: center; }
.logo svg { width: 60px; height: 19px; margin-bottom: 2px; }
.app-header h1 { margin: 1px 0 0; font-size: 15px; line-height: 15px; font-weight: 300; }
.app-header h1 b { display: block; font-size: 15px; font-weight: 500; }
.app-header small { display: block; width: 16px; margin-top: 3px; font-size: 5px; line-height: 9px; font-weight: 500; text-align: center; color: #d7effb; background: #12a3e4; border-radius: 1px; }
.app-header p { margin: 9px 18px 0 auto; font-size: 11px; line-height: 14px; font-weight: 300; }
.app-header p b { font-weight: 400; }
.social { display: flex; box-shadow: 0 3px 10px #0005; border-radius: 2px; overflow: hidden; }
.social a { width: 36px; height: 34px; display: grid; place-items: center; }
.social svg { width: 17px; height: 17px; }
.fb { background: #455f9c; }
.tw { background: #55acee; }
.workspace { position: relative; flex: 1; display: flex; align-items: flex-end; gap: 71px; padding: 0 15px 15px; }
.side { align-self: stretch; width: 41px; display: flex; flex-direction: column; justify-content: space-between; }
.tools { background: #eaeaea; border-radius: 2px; overflow: hidden; box-shadow: 0 3px 12px #0006; color: #111; }
.grip { height: 12px; display: grid; place-items: center; border-bottom: 1px solid #ddd; }
.grip i { width: 11px; height: 5px; background: repeating-linear-gradient(90deg, #bbb 0 1px, transparent 1px 2px); }
.tool { position: relative; width: 100%; height: 40px; border-bottom: 1px solid #ddd; }
.tool:last-child { border: 0; height: 38px; }
.tool svg { width: 16px; height: 16px; }
.selected { background: #fff; }
.more::after { content: ""; position: absolute; right: 4px; bottom: 4px; border: 2px solid; border-color: transparent #bbb #bbb transparent; }
.text-tool { font: 20px "Liberation Serif", serif; }
.color { width: 24px; height: 24px; background: repeating-conic-gradient(#61d1b6 0 25%, #70dec3 0 50%) 0 0 / 9px 9px; }
.zoom { width: 24px; display: flex; flex-direction: column; align-items: center; }
.zoom button { width: 24px; height: 24px; border-radius: 50%; background: #fff; box-shadow: 0 2px 6px #0005; }
.zoom svg { width: 12px; height: 12px; }
.zoom input { appearance: none; writing-mode: vertical-lr; direction: rtl; width: 16px; height: 66px; margin: 4px 0; background: repeating-linear-gradient(transparent 0 4px, #636363 4px 5px, transparent 5px 8px) center / 14px 100% no-repeat; }
.zoom input::-webkit-slider-thumb { appearance: none; width: 16px; height: 8px; border-radius: 2px; background: #fff; }

/* Options panel */
.options { flex: 1; display: grid; grid-template-columns: 18px 142fr 214fr 83fr 188fr 236fr; height: 110px; background: #393939f2; border-radius: 2px; box-shadow: 0 3px 14px #0005; color: #757575; font-weight: 300; }
.options > * { min-width: 0; }
.hide { flex-direction: column; justify-content: flex-start; background: #323232; color: #1694cf; font-size: 10px; padding-top: 4px; gap: 4px; }
.hide svg { width: 9px; height: 7px; }
.hide .arrow { width: 7px; height: 11px; margin: 5px 0 0 2px; }
.hide span { writing-mode: vertical-rl; transform: rotate(180deg); white-space: nowrap; }
.projection { padding: 9px 14px 0 16px; font-size: 13px; }
.projection label { display: block; line-height: 18px; }
.select { position: relative; margin-top: 4px; height: 26px; border-bottom: 1px dashed #6a6a6a; }
.select select { appearance: none; width: 100%; height: 20px; padding: 0; border: 0; background: none; font: 400 13px Roboto, sans-serif; color: #12a3e4; }
.select svg { position: absolute; right: 0; top: 9px; width: 12px; height: 8px; color: #888; }
.globe { width: 38px; height: 20px; margin: 16px auto 0; }
.area { position: relative; padding: 27px 15px 0 16px; }
.swatches { display: grid; grid-template-columns: 1fr 1fr; margin-top: 17px; }
.swatch { position: relative; justify-content: flex-start; gap: 10px; font-size: 11px; }
.swatch i { width: 20px; height: 20px; border: 1px solid #5b5b5b; background: #505050; }
.swatch.ground i { background: #828282; border-color: #767676; }
.swatch::after { content: ""; position: absolute; right: 4px; bottom: -1px; border: 2px solid; border-color: transparent #222 #222 transparent; }
.dropdown { position: absolute; left: 5px; bottom: 81px; width: 182px; height: 238px; display: flex; overflow: hidden; background: #393939f7; box-shadow: 0 -2px 16px #0004; font-size: 10px; }
.dropdown ul { flex: 1; margin: 0; padding: 0; list-style: none; }
.dropdown li { height: 41px; line-height: 41px; padding-left: 8px; border-bottom: 1px solid #343434; }
.scrollbar { width: 11px; padding: 2px; background: #f0f0f0; }
.scrollbar i { display: block; height: 19px; background: #c1c1c1; }
.shapes { display: grid; grid-template-columns: 1fr 1fr; grid-template-rows: 1fr 1fr; border-right: 1px solid #343434; border-left: 1px solid #343434; }
.shapes label { display: grid; place-items: center; position: relative; padding-bottom: 5px; }
.shapes label:nth-child(odd) { border-right: 1px solid #343434; }
.shapes label:nth-child(-n+2) { border-bottom: 1px solid #343434; }
.shapes input { position: absolute; opacity: 0; margin: 0; }
.shapes svg { width: 20px; height: 20px; fill: none; stroke: #696969; }
.shapes circle { stroke: none; }
.sliders { display: grid; grid-template-columns: 1fr 80px 25px; grid-template-rows: 16px 16px; align-content: start; align-items: center; row-gap: 33px; padding: 20px 15px 0; border-right: 1px solid #343434; font-size: 10px; }
.sliders input { appearance: none; width: 80px; height: 16px; margin: 0; background: linear-gradient(90deg, #12a3e4 var(--fill), #505050 var(--fill)) center / calc(100% - 16px) 4px no-repeat; }
.sliders input::-webkit-slider-thumb { appearance: none; width: 16px; height: 16px; border-radius: 50%; background: #fff; }
.sliders output { text-align: right; color: #1686ba; font-weight: 400; }
.export { position: relative; padding: 11px 15px; display: flex; flex-direction: column; gap: 11px; color: #eee; font-weight: 400; }
.generate { height: 45px; border-radius: 2px; background: #12a3e4; font-size: 13px; box-shadow: 0 1px 3px #0004; }
.formats { display: flex; justify-content: space-between; gap: 8px; }
.formats button { height: 31px; padding: 0 9px; gap: 6px; border-radius: 1px; background: #2c2c2c; font-size: 10px; }
.formats svg { width: 12px; height: 13px; }
.feedly-mini { position: absolute; right: 0; bottom: 0; width: 18px; height: 17px; color: #272727; --mark: #777; }

/* System shelf */
.shelf { height: 35px; display: flex; align-items: flex-start; padding: 4px 3px 0 4px; background: #030303; color: #eee; font-size: 10px; font-weight: 500; }
.tile { width: 24px; height: 24px; background: #2a2a2a; border-radius: 1px; }
.search svg { width: 12px; height: 12px; }
.launcher { display: flex; width: 324px; margin: 0 auto 0 9px; }
.launcher button { flex: 1; height: 31px; align-items: flex-start; }
.launcher svg { width: 24px; height: 24px; }
.launcher .running { background: linear-gradient(#ccc, #ccc) bottom / 24px 2px no-repeat; }
.feedly { color: #24883f; --mark: #ddd; }
.tray { height: 24px; margin-left: 8px; padding: 0 4px 0 6px; gap: 6px; background: #2a2a2a; }
.tray svg { width: 13px; height: 12px; }
.avatar { width: 24px; height: 24px; }
```
